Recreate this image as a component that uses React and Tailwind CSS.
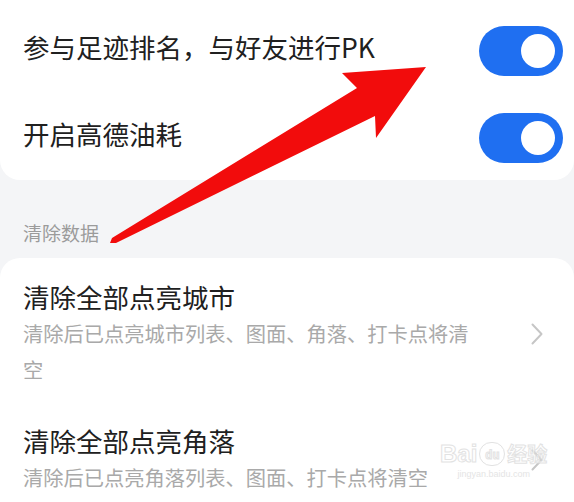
import React from 'react';

const Toggle = () => (
    <div className="w-[84px] h-[50px] rounded-full bg-[#1f6ff1] flex items-center justify-end pr-[8px] shrink-0">
        <div className="w-[34px] h-[34px] rounded-full bg-white" />
    </div>
);

const Chevron = () => (
    <svg width="12" height="22" viewBox="0 0 12 22" className="shrink-0">
        <polyline points="1.5,1.5 10.5,11 1.5,20.5" fill="none" stroke="#c6c6c6" strokeWidth="2" strokeLinecap="round" strokeLinejoin="round" />
    </svg>
);

const settings = ['参与足迹排名，与好友进行PK', '开启高德油耗'];

const clearItems = [
    { title: '清除全部点亮城市', desc: '清除后已点亮城市列表、图面、角落、打卡点将清空' },
    { title: '清除全部点亮角落', desc: '清除后已点亮角落列表、图面、打卡点将清空' },
];

export default function App() {
    return (
        <div className="relative w-[574px] h-[502px] overflow-hidden bg-[#f4f5f7] font-['Noto_Sans_CJK_SC','Noto_Sans',sans-serif]">

            {/* Toggle card */}
            <div className="bg-white rounded-b-[20px] h-[180px] pt-[26px] pl-[23px] pr-[11px] flex flex-col gap-[37px]">
                {settings.map(label => (
                    <div key={label} className="flex items-center justify-between h-[50px]">
                        <span className="text-[26.5px] leading-[34px] text-[#202020] pb-[9px]">{label}</span>
                        <Toggle />
                    </div>
                ))}
            </div>

            {/* Section header */}
            <div className="pl-[23px] mt-[40px] mb-[12px] text-[19px] leading-[26px] text-[#9b9b9b]">清除数据</div>

            {/* Clear data card */}
            <div className="bg-white rounded-t-[20px] h-[300px] pt-[22px] pl-[23px] pr-[31px] flex flex-col gap-[36px]">
                {clearItems.map(item => (
                    <div key={item.title} className="flex items-center gap-[50px]">
                        <div className="flex-1">
                            <div className="text-[26.5px] leading-[34px] text-[#202020]">{item.title}</div>
                            <div className="mt-[2px] text-[20.25px] leading-[36px] text-[#a9a9a9]">{item.desc}</div>
                        </div>
                        <Chevron />
                    </div>
                ))}
            </div>

            {/* Red annotation arrow */}
            <svg className="absolute inset-0 pointer-events-none" width="574" height="502" viewBox="0 0 574 502">
                <polygon
                    points="110,243 112,238 357,88 342,73 426,67 376,138 375,116 116,243"
                    fill="#f20c0c"
                />
            </svg>

            {/* Watermark */}
            <div className="absolute left-[440px] top-[440px] flex flex-col items-center pointer-events-none opacity-80">
                <div className="flex items-center gap-[2px] text-[24px] leading-[28px] font-bold text-white [-webkit-text-stroke:1px_#dcdcdc]">
                    <span className="font-['Liberation_Sans',sans-serif]">Bai</span>
                    <span className="w-[26px] h-[24px] rounded-full border border-[#dcdcdc] text-[11px] leading-[22px] text-center text-white">du</span>
                    <span className="text-[20px]">经验</span>
                </div>
                <div className="text-[9px] leading-[12px] text-[#dedede] font-['Liberation_Sans',sans-serif]">jingyan.baidu.com</div>
            </div>
        </div>
    );
}
